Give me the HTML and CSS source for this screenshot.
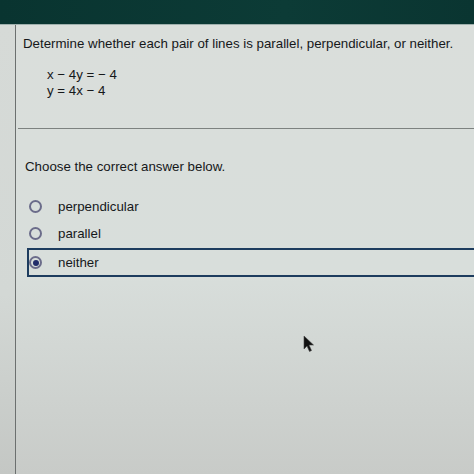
FILE: index.html
```html
<!DOCTYPE html>
<html>
<head>
<meta charset="utf-8">
<link rel="stylesheet" href="styles.css">
</head>
<body>
<div class="topbar"></div>
<div class="screen">
  <div class="panel">
    <p class="question">Determine whether each pair of lines is parallel, perpendicular, or neither.</p>
    <div class="equations">
      <div>x − 4y = − 4</div>
      <div>y = 4x − 4</div>
    </div>
    <hr class="rule">
    <p class="prompt">Choose the correct answer below.</p>
    <div class="options">
      <div class="option"><span class="radio"></span><span>perpendicular</span></div>
      <div class="option"><span class="radio"></span><span>parallel</span></div>
      <div class="option selected"><span class="radio checked"></span><span>neither</span></div>
    </div>
  </div>
  <svg class="cursor" width="12" height="18" viewBox="0 0 12 18"><path d="M1 1 L1 14 L4 11 L6.5 16.5 L8.5 15.5 L6 10 L10.5 10 Z" fill="#111" stroke="#444" stroke-width="0.6"/></svg>
</div>
</body>
</html>
```
FILE: styles.css
```css
html, body { margin: 0; padding: 0; }
body {
  width: 474px; height: 474px; overflow: hidden;
  font-family: "Liberation Sans", Arial, sans-serif;
  background: #c9ccc9;
  color: #16181a;
}
.topbar {
  height: 24px;
  background: linear-gradient(90deg, #093430 0%, #0c3b36 60%, #0a3531 100%);
  border-bottom: 1px solid #9fb0ad;
}
.screen {
  position: relative;
  height: 449px;
  padding-left: 15px;
  background: linear-gradient(180deg, #d6dad7 0%, #d3d8d5 60%, #c4c7c4 100%);
}
.panel {
  height: 100%;
  border-left: 1.5px solid #6c706f;
  background: linear-gradient(180deg, #dadedb 0%, #d8dedb 55%, #c8cbc8 100%);
}
.question {
  margin: 0;
  padding: 11px 0 0 7px;
  font-size: 13.3px;
  line-height: 16px;
}
.equations {
  padding: 15px 0 0 31px;
  font-size: 13.3px;
  line-height: 16px;
}
.rule {
  margin: 29px 0 0 2px;
  border: none;
  border-top: 1px solid #7d8280;
}
.prompt {
  margin: 0;
  padding: 30px 0 0 9px;
  font-size: 13.3px;
  line-height: 16px;
}
.options {
  padding-top: 18px;
  display: flex;
  flex-direction: column;
}
.option {
  display: flex;
  align-items: center;
  gap: 16px;
  height: 27px;
  margin-left: 11px;
  padding-left: 2px;
  font-size: 13.3px;
}
.option.selected {
  border: 2px solid #1d3c5e;
  border-right: none;
  height: 25px;
  padding-left: 0;
  margin-top: 1px;
}
.radio {
  width: 9px; height: 9px;
  border: 2px solid #6b6c8a;
  border-radius: 50%;
  box-sizing: content-box;
  display: flex; align-items: center; justify-content: center;
}
.radio.checked::after {
  content: "";
  width: 6px; height: 6px;
  border-radius: 50%;
  background: #222d6a;
}
.cursor {
  position: absolute;
  left: 303px; top: 310px;
}
```
